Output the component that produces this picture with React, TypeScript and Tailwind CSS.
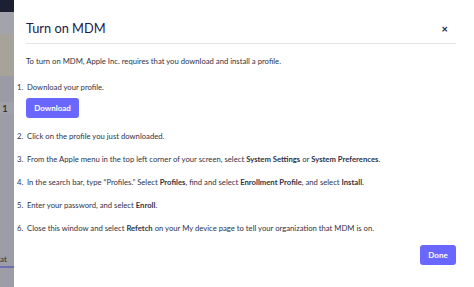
import React from "react";

const font = { fontFamily: "Lato, 'Noto Sans', sans-serif" };

function Step({ n, children }: { n: number; children: React.ReactNode }) {
  return (
    <div className="flex h-[23px] items-center">
      <span className="w-[10px] shrink-0">{n}.</span>
      <span>{children}</span>
    </div>
  );
}

export default function App() {
  return (
    <div className="flex h-[287px] w-[474px] overflow-hidden bg-white text-[#2f3347]" style={font}>
      <div className="flex w-[14px] shrink-0 flex-col bg-[#8f909b]">
        <div className="h-[12px] bg-[#1d2033]" />
        <div className="h-[22px] bg-[#a3a4ab]" />
        <div className="h-[42px] bg-[#a7a39a]" />
        <div className="h-[26px] bg-[#9a9ba4]" />
        <div className="h-[12px] text-[10px] leading-[12px] text-[#222] pl-[2px] bg-[#a0a1a9]">1</div>
        <div className="h-[138px] bg-[#9c9da6]" />
        <div className="h-[14px] text-[8px] leading-[14px] text-[#333] bg-[#9c9da6]">at</div>
        <div className="h-[2px] bg-[#6e6fb0]" />
        <div className="flex-1 bg-[#9c9da6]" />
      </div>
      <div className="flex flex-1 flex-col pl-[12px] pr-[18px]">
        <div className="flex h-[44px] items-end justify-between border-b border-[#e3e4ea] pb-[7px]">
          <span className="text-[12.8px] leading-[16px] text-[#192147]">Turn on MDM</span>
          <span className="mr-[8px] mb-[2px] text-[11px] font-bold leading-[10px] text-[#192147]">×</span>
        </div>
        <div className="ml-[-9px] text-[7.7px] leading-[10px]">
          <div className="flex h-[23px] items-end pl-[9px] pb-[1px]">
            To turn on MDM, Apple Inc. requires that you download and install a profile.
          </div>
          <div className="h-[8px]" />
          <Step n={1}>Download your profile.</Step>
          <div className="pl-[9px] pt-[0px]">
            <button className="h-[20px] w-[53px] rounded-[3px] bg-[#6a67fe] text-[8px] font-bold text-white">
              Download
            </button>
          </div>
          <div className="h-[6px]" />
          <Step n={2}>Click on the profile you just downloaded.</Step>
          <Step n={3}>
            From the Apple menu in the top left corner of your screen, select <b>System Settings</b> or{" "}
            <b>System Preferences</b>.
          </Step>
          <Step n={4}>
            In the search bar, type “Profiles.” Select <b>Profiles</b>, find and select <b>Enrollment Profile</b>, and
            select <b>Install</b>.
          </Step>
          <Step n={5}>
            Enter your password, and select <b>Enroll</b>.
          </Step>
          <Step n={6}>
            Close this window and select <b>Refetch</b> on your My device page to tell your organization that MDM is on.
          </Step>
        </div>
        <div className="mt-[6px] flex justify-end">
          <button className="h-[20px] w-[36px] rounded-[3px] bg-[#6a67fe] text-[8px] font-bold text-white">Done</button>
        </div>
      </div>
    </div>
  );
}
